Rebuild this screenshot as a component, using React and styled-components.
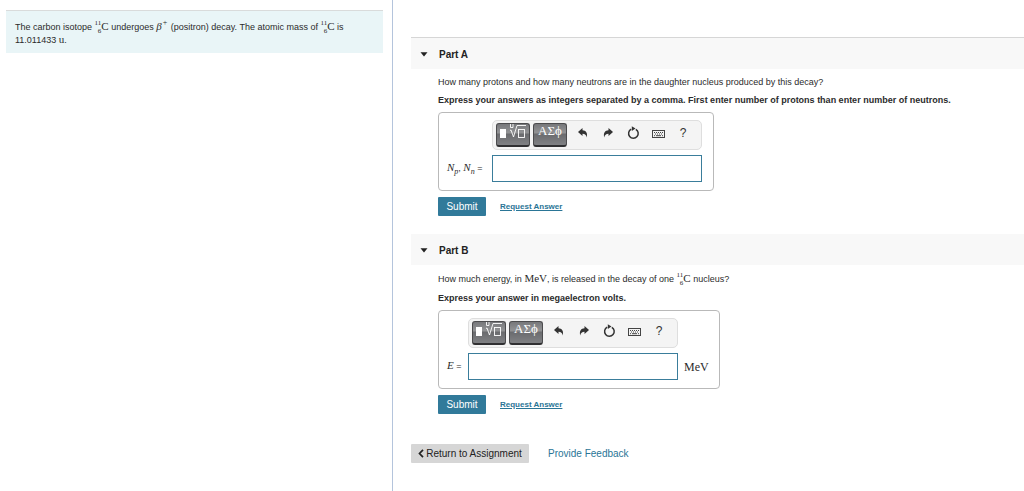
import styled, { createGlobalStyle } from 'styled-components';

const GlobalStyle = createGlobalStyle`
  * {
    box-sizing: border-box;
  }
  body {
    margin: 0;
    background: #fff;
    color: #2b2b2b;
    font-family: "Liberation Sans", Arial, sans-serif;
    font-size: 9px;
    line-height: 13px;
  }
  button, input {
    font-family: inherit;
  }
`

const Page = styled.div`
  display: grid;
  grid-template-columns: 49fr 79fr;
  min-height: 100vh;
`
const Sidebar = styled.aside`
  padding: 10px 9px 0 6px;
`
const Intro = styled.p`
  margin: 0;
  padding: 10px 30px 6px 9px;
  border-top: 1px solid #d9dbdb;
  background: #e9f5f7;
`
const Content = styled.main`
  padding: 37px 0 28px 18px;
  border-left: 1px solid #b4c4dc;
`

// math bits
const MathText = styled.span`
  font-family: "Liberation Serif", "Times New Roman", serif;
  font-size: ${({ $size }) => $size || 11}px;
  font-style: ${({ $italic }) => ($italic ? 'italic' : 'normal')};
  line-height: 1;

  sub, sup {
    font-size: 8px;
    line-height: 0;
  }
  sup {
    margin: 0 1px;
  }
`
const Stack = styled.span`
  display: inline-flex;
  flex-direction: column;
  align-items: flex-end;
  margin: -3px 0;
  vertical-align: middle;
  font-size: 7px;
  line-height: 8px;
`

const Part = styled.section`
  margin-bottom: 18px;
`
const PartHeader = styled.header`
  display: flex;
  align-items: center;
  height: ${({ $first }) => ($first ? 32 : 31)}px;
  padding-left: 9px;
  border-top: ${({ $first }) => ($first ? '1px solid #d6d6d6' : '0')};
  background: #f8f8f8;
`
const Toggle = styled.button`
  display: flex;
  align-items: center;
  gap: 11px;
  padding: 1px 0 0;
  border: 0;
  background: none;
  color: #222;
  font-size: 10px;
  font-weight: bold;
  line-height: 13px;
`
const PartBody = styled.div`
  padding: 7px 24px 0 27px;
`
const Question = styled.p`
  margin: 0;
  line-height: ${({ $tall }) => ($tall ? 15 : 13)}px;
`
const Instruction = styled.p`
  margin: 5px 0;
  font-weight: bold;
`
const AnswerBox = styled.form`
  display: inline-grid;
  grid-template-columns: auto 210px auto;
  column-gap: 6px;
  row-gap: 5px;
  align-items: center;
  padding: 7px ${({ $unit }) => ($unit ? 10 : 5)}px 8px 8px;
  border: 1px solid #b9b9b9;
  border-radius: 4px;
  vertical-align: top;
`
const Toolbar = styled.div`
  grid-column: 2;
  display: flex;
  align-items: center;
  gap: 3px;
  height: 30px;
  padding: 0 3px;
  border: 1px solid #dedede;
  border-radius: 5px;
  background: #f4f4f4;
`
const PaletteButton = styled.button`
  display: flex;
  justify-content: center;
  align-items: flex-start;
  width: 34px;
  height: 24px;
  padding: 0;
  border: 1px solid #4c4c4e;
  border-bottom: 2px solid #303032;
  border-radius: 3px;
  background: linear-gradient(#77787b, #929395 40%, #6b6c6f 50%, #808184);
  color: #fff;
  font-family: "Liberation Serif", "Times New Roman", serif;
  font-size: 13px;
  line-height: 14px;
`
const Tools = styled.div`
  flex: 1;
  display: flex;
  justify-content: space-between;
  padding: 0 8px 4px 6px;
`
const ToolButton = styled.button`
  display: grid;
  place-items: center;
  width: 14px;
  height: 16px;
  padding: 0;
  border: 0;
  background: none;
  color: #333;
  font-size: 12px;
  line-height: 16px;
`
const Label = styled.label`
  grid-column: 1;
  min-width: ${({ $wide }) => ($wide ? 39 : 15)}px;
  font-size: 9px;
  white-space: nowrap;
`
const AnswerInput = styled.input`
  width: 100%;
  height: 27px;
  padding: 0 6px;
  border: 1px solid #3a7d9b;
  background: #fff;
  font-size: 12px;
  outline: none;
`
const Actions = styled.div`
  display: flex;
  align-items: center;
  gap: 14px;
  margin-top: 6px;
`
const Submit = styled.button`
  width: 48px;
  height: 19px;
  padding: 0;
  border: 0;
  border-radius: 1px;
  background: #317a9a;
  color: #fff;
  font-size: 10px;
`
const TextLink = styled.a`
  color: #2a7596;
  font-size: ${({ $strong }) => ($strong ? 8 : 10)}px;
  font-weight: ${({ $strong }) => ($strong ? 'bold' : 'normal')};
  text-decoration: ${({ $strong }) => ($strong ? 'underline' : 'none')};
`
const Footer = styled.footer`
  display: flex;
  align-items: center;
  gap: 19px;
  padding-top: 12px;
`
const ReturnButton = styled.button`
  display: flex;
  justify-content: center;
  align-items: center;
  gap: 2px;
  width: 118px;
  height: 19px;
  padding: 0;
  border: 0;
  border-radius: 1px;
  background: #d6d6d6;
  color: #222;
  font-size: 10px;
`

const Carbon = () => (
  <MathText><Stack><span>11</span><span>6</span></Stack>C</MathText>
);

const Caret = () => (
  <svg width="8" height="5" viewBox="0 0 8 5"><path d="M0.5 0.3h7L4 4.6z" fill="#222" /></svg>
);

const TemplateIcon = () => (
  <svg width="28" height="17" viewBox="0 0 28 17" fill="none" stroke="#fff">
    <rect x="1" y="5" width="6" height="9" fill="#fff" stroke="none" />
    <path d="M11 6.500l1-.5 2.500 7L18 1.500h9" strokeWidth="0.9" />
    <path d="M11.500 0v3.500h2.500V0" strokeWidth="0.9" />
    <rect x="19.500" y="5.500" width="6" height="8" strokeWidth="0.9" />
  </svg>
);

const UndoIcon = () => (
  <svg width="12" height="12" viewBox="0 0 12 12" fill="#333">
    <path d="M1 5l4.500-4v2.300C8.800 3.500 10.800 5.700 9.800 10.500 9.200 8 8 6.900 5.500 6.800V9z" />
  </svg>
);

const RedoIcon = () => (
  <svg width="12" height="12" viewBox="0 0 12 12" fill="#333">
    <path d="M11 5L6.500 1v2.300C3.200 3.500 1.200 5.700 2.200 10.500 2.800 8 4 6.900 6.500 6.800V9z" />
  </svg>
);

const ResetIcon = () => (
  <svg width="13" height="14" viewBox="0 0 13 14">
    <path d="M8.800 3.300A4.800 4.800 0 1 1 4.200 3.200" fill="none" stroke="#333" strokeWidth="1.500" />
    <path d="M4.800 0.300l3.700 2.200-3.700 2.500z" fill="#333" />
  </svg>
);

const KeyboardIcon = () => (
  <svg width="13" height="9" viewBox="0 0 13 9" fill="none" stroke="#444">
    <rect x="0.500" y="1.500" width="12" height="7" />
    <path d="M2 3.500h9M3 5h8" strokeDasharray="1 1" />
    <path d="M2 6.700h1M4 6.700h5M10 6.700h1" />
  </svg>
);

const MathToolbar = () => (
  <Toolbar>
    <PaletteButton type="button" aria-label="Templates"><TemplateIcon /></PaletteButton>
    <PaletteButton type="button" aria-label="Symbols">ΑΣϕ</PaletteButton>
    <Tools>
      <ToolButton type="button" aria-label="Undo"><UndoIcon /></ToolButton>
      <ToolButton type="button" aria-label="Redo"><RedoIcon /></ToolButton>
      <ToolButton type="button" aria-label="Reset"><ResetIcon /></ToolButton>
      <ToolButton type="button" aria-label="Keyboard shortcuts"><KeyboardIcon /></ToolButton>
      <ToolButton type="button" aria-label="Help">?</ToolButton>
    </Tools>
  </Toolbar>
);

const ProblemPart = ({ id, title, question, instruction, label, unit, first }) => (
  <Part>
    <PartHeader $first={first}>
      <Toggle type="button"><Caret />{title}</Toggle>
    </PartHeader>
    <PartBody>
      <Question $tall={!first}>{question}</Question>
      <Instruction>{instruction}</Instruction>
      <AnswerBox id={`form-${id}`} $unit={!!unit} onSubmit={(e) => e.preventDefault()}>
        <MathToolbar />
        <Label htmlFor={id} $wide={!unit}>{label} =</Label>
        <AnswerInput id={id} type="text" autoComplete="off" />
        {unit && <MathText $size={12}>{unit}</MathText>}
      </AnswerBox>
      <Actions>
        <Submit type="submit" form={`form-${id}`}>Submit</Submit>
        <TextLink href="#answer" $strong>Request Answer</TextLink>
      </Actions>
    </PartBody>
  </Part>
);

const App = () => (
  <>
    <GlobalStyle />
    <Page>
      <Sidebar>
        <Intro>
          The carbon isotope <Carbon /> undergoes <MathText $italic>β</MathText>
          <MathText><sup>+</sup></MathText> (positron) decay. The atomic mass of <Carbon /> is
          {' '}11.011433 <MathText>u</MathText>.
        </Intro>
      </Sidebar>
      <Content>
        <ProblemPart
          first
          id="part-a"
          title="Part A"
          question="How many protons and how many neutrons are in the daughter nucleus produced by this decay?"
          instruction="Express your answers as integers separated by a comma. First enter number of protons than enter number of neutrons."
          label={<><MathText $italic>N<sub>p</sub></MathText>, <MathText $italic>N<sub>n</sub></MathText></>}
        />
        <ProblemPart
          id="part-b"
          title="Part B"
          question={<>How much energy, in <MathText>MeV</MathText>, is released in the decay of one <Carbon /> nucleus?</>}
          instruction="Express your answer in megaelectron volts."
          label={<MathText $italic>E</MathText>}
          unit="MeV"
        />
        <Footer>
          <ReturnButton type="button">
            <svg width="6" height="9" viewBox="0 0 6 9"><path d="M5 0.800L1.500 4.500 5 8.200" fill="none" stroke="#222" strokeWidth="1.700" /></svg>
            Return to Assignment
          </ReturnButton>
          <TextLink href="#feedback">Provide Feedback</TextLink>
        </Footer>
      </Content>
    </Page>
  </>
);

export default App;
